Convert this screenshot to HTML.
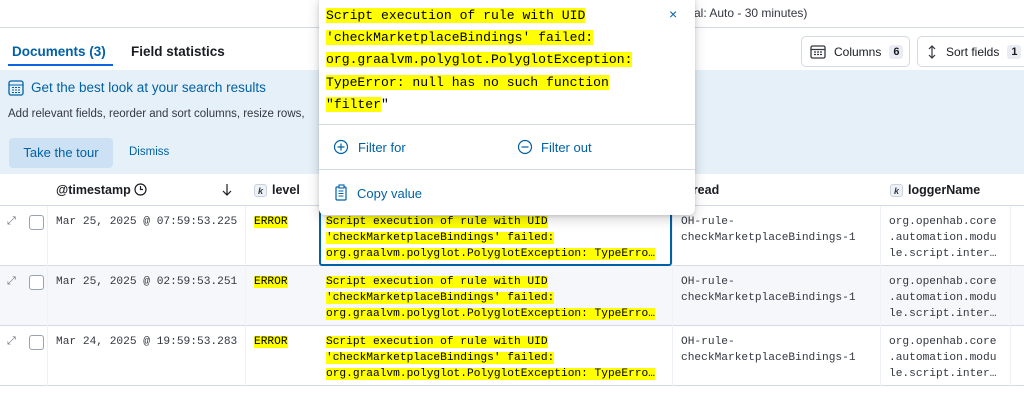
<!DOCTYPE html>
<html><head><meta charset="utf-8"><style>
*{box-sizing:border-box;margin:0;padding:0}
body{width:1024px;height:401px;overflow:hidden;background:#fff;font-family:"Liberation Sans",sans-serif;position:relative;color:#1a1c21}
.a{position:absolute}
.mono{font-family:"Liberation Mono",monospace;font-size:11.2px;line-height:16px;color:#343741;white-space:nowrap}
.hl{background:#ff0;color:#000}
.row{position:absolute;left:0;width:1024px;height:60px;border-bottom:1px solid #d3dae6}
.hdr{font-weight:bold;font-size:12.5px}
.kb{display:inline-block;width:13px;height:13px;border:1px solid #c9d3e0;border-radius:3px;background:#eef2f7;font-size:9px;font-style:italic;font-weight:bold;text-align:center;line-height:12px;color:#343741;vertical-align:middle;margin-right:5px}
.btn{position:absolute;top:36px;height:31px;border:1px solid #d3dae6;border-radius:5px;font-size:12px;display:flex;align-items:center;padding-left:8px;gap:8px;color:#1a1c21}
.cnt{background:#e9edf3;border-radius:3px;padding:1px 4px;font-weight:bold;font-size:11px}
.vl{position:absolute;top:206px;width:1px;height:180px;background:#eef1f5}
</style></head><body>
<div class="a" style="left:0;top:0;width:1024px;height:28px;border-bottom:1px solid #d3dae6"></div>
<div class="a" style="left:694px;top:6px;font-size:12px;color:#343741">al: Auto - 30 minutes)</div>
<div class="a" style="left:12px;top:44px;font-size:13.5px;font-weight:bold;color:#0061a6">Documents (3)</div>
<div class="a" style="left:8px;top:64px;width:105px;height:2px;background:#0b64dd"></div>
<div class="a" style="left:131px;top:44px;font-size:13.5px;font-weight:bold">Field statistics</div>
<div class="btn" style="left:801px;width:109px"><svg width="16" height="14" viewBox="0 0 16 14"><rect x="1" y="1" width="14" height="12" rx="1.5" fill="none" stroke="#343741" stroke-width="1.3"/><path d="M1 4.5h14M4 7h2M7 7h2M10 7h2M4 9.5h2M7 9.5h2M10 9.5h2" stroke="#343741" stroke-width="1.2"/></svg>Columns <span class="cnt">6</span></div>
<div class="btn" style="left:917px;width:120px"><svg width="12" height="14" viewBox="0 0 12 14"><path d="M6 1v12M3 4l3-3 3 3M3 10l3 3 3-3" fill="none" stroke="#343741" stroke-width="1.2"/></svg>Sort fields <span class="cnt">1</span></div>
<div class="a" style="left:0;top:70px;width:1024px;height:104px;background:#e6f0f8"></div>
<svg class="a" style="left:8px;top:80px" width="16" height="16" viewBox="0 0 16 16"><rect x="1" y="1" width="14" height="14" rx="2" fill="none" stroke="#0061a6" stroke-width="1.3"/><path d="M1 5h14M4 7.5h2M7 7.5h2M10 7.5h2M4 10h2M7 10h2M10 10h2M4 12.5h2M7 12.5h2M10 12.5h2" stroke="#0061a6" stroke-width="1"/></svg>
<div class="a" style="left:31px;top:80px;font-size:13.5px;color:#0061a6">Get the best look at your search results</div>
<div class="a" style="left:8px;top:108px;font-size:11.5px;color:#343741">Add relevant fields, reorder and sort columns, resize rows,</div>
<div class="a" style="left:9px;top:138px;width:104px;height:30px;background:#cce1f4;border-radius:4px;font-size:13px;color:#0061a6;text-align:center;line-height:30px">Take the tour</div>
<div class="a" style="left:129px;top:146px;font-size:11.5px;color:#0061a6">Dismiss</div>
<div class="a" style="left:0;top:174px;width:1024px;height:32px;border-bottom:1px solid #d3dae6"></div>
<div class="a hdr" style="left:56px;top:183px">@timestamp <svg width="13" height="13" viewBox="0 0 13 13" style="vertical-align:-2px"><circle cx="6.5" cy="6.5" r="5.5" fill="none" stroke="#1a1c21" stroke-width="1.2"/><path d="M6.5 3v3.5h2.5" fill="none" stroke="#1a1c21" stroke-width="1.2"/></svg></div>
<svg class="a" style="left:221px;top:183px" width="12" height="13" viewBox="0 0 12 13"><path d="M6 1v11M2 8l4 4 4-4" fill="none" stroke="#1a1c21" stroke-width="1.2"/></svg>
<div class="a hdr" style="left:254px;top:183px"><span class="kb">k</span>level</div>
<div class="a hdr" style="left:681px;top:183px">thread</div>
<div class="a hdr" style="left:890px;top:183px"><span class="kb">k</span>loggerName</div>

<div class="row" style="top:206px"></div>
<div class="row" style="top:266px;background:#f5f7fa"></div>
<div class="row" style="top:326px"></div>
<div class="vl" style="left:672px"></div>
<div class="vl" style="left:880px"></div>
<div class="vl" style="left:1010px"></div>
<div class="vl" style="left:245px"></div>
<div class="vl" style="left:47px"></div>
<div class="a" style="left:319px;top:206px;width:353px;height:60px;border:2px solid #0061a6;border-radius:3px"></div>

<!-- row 1 -->
<div class="a" style="left:7px;top:215px;color:#69707d;font-size:11px">⤢</div>
<div class="a" style="left:29px;top:215px;width:15px;height:15px;border:1px solid #98a2b3;border-radius:3px;background:#fff"></div>
<div class="a mono" style="left:56px;top:214px">Mar 25, 2025 @ 07:59:53.225</div>
<div class="a mono" style="left:254px;top:214px"><span class="hl">ERROR</span></div>
<div class="a mono" style="left:326px;top:214px"><span class="hl">Script execution of rule with UID </span><br><span class="hl">'checkMarketplaceBindings' failed: </span><br><span class="hl">org.graalvm.polyglot.PolyglotException: TypeErro…</span></div>
<div class="a mono" style="left:681px;top:214px">OH-rule-<br>checkMarketplaceBindings-1</div>
<div class="a mono" style="left:889px;top:214px">org.openhab.core<br>.automation.modu<br>le.script.inter…</div>
<!-- row 2 -->
<div class="a" style="left:7px;top:275px;color:#69707d;font-size:11px">⤢</div>
<div class="a" style="left:29px;top:275px;width:15px;height:15px;border:1px solid #98a2b3;border-radius:3px;background:#fff"></div>
<div class="a mono" style="left:56px;top:274px">Mar 25, 2025 @ 02:59:53.251</div>
<div class="a mono" style="left:254px;top:274px"><span class="hl">ERROR</span></div>
<div class="a mono" style="left:326px;top:274px"><span class="hl">Script execution of rule with UID </span><br><span class="hl">'checkMarketplaceBindings' failed: </span><br><span class="hl">org.graalvm.polyglot.PolyglotException: TypeErro…</span></div>
<div class="a mono" style="left:681px;top:274px">OH-rule-<br>checkMarketplaceBindings-1</div>
<div class="a mono" style="left:889px;top:274px">org.openhab.core<br>.automation.modu<br>le.script.inter…</div>
<!-- row 3 -->
<div class="a" style="left:7px;top:335px;color:#69707d;font-size:11px">⤢</div>
<div class="a" style="left:29px;top:335px;width:15px;height:15px;border:1px solid #98a2b3;border-radius:3px;background:#fff"></div>
<div class="a mono" style="left:56px;top:334px">Mar 24, 2025 @ 19:59:53.283</div>
<div class="a mono" style="left:254px;top:334px"><span class="hl">ERROR</span></div>
<div class="a mono" style="left:326px;top:334px"><span class="hl">Script execution of rule with UID </span><br><span class="hl">'checkMarketplaceBindings' failed: </span><br><span class="hl">org.graalvm.polyglot.PolyglotException: TypeErro…</span></div>
<div class="a mono" style="left:681px;top:334px">OH-rule-<br>checkMarketplaceBindings-1</div>
<div class="a mono" style="left:889px;top:334px">org.openhab.core<br>.automation.modu<br>le.script.inter…</div>

<!-- popover -->
<div class="a" style="left:319px;top:-4px;width:376px;height:219px;background:#fff;border-radius:6px;box-shadow:0 4px 12px rgba(0,0,0,.18),0 1px 3px rgba(0,0,0,.12)">
  <div class="a" style="left:7px;top:9px;width:340px;font-family:'Liberation Mono',monospace;font-size:13.1px;line-height:22.2px;color:#000;white-space:nowrap"><span class="hl">Script execution of rule with UID</span><br><span class="hl">'checkMarketplaceBindings' failed:</span><br><span class="hl">org.graalvm.polyglot.PolyglotException:</span><br><span class="hl">TypeError: null has no such function</span><br><span class="hl">"filter</span>"</div>
  <div class="a" style="left:350px;top:10px;color:#0061a6;font-size:14px">×</div>
  <div class="a" style="left:0;top:128px;width:376px;height:1px;background:#d3dae6"></div>
  <svg class="a" style="left:14px;top:143px" width="16" height="16" viewBox="0 0 16 16"><circle cx="8" cy="8" r="6.5" fill="none" stroke="#0061a6" stroke-width="1.2"/><path d="M8 4.5v7M4.5 8h7" stroke="#0061a6" stroke-width="1.2"/></svg>
  <div class="a" style="left:39px;top:144px;font-size:13px;color:#0061a6">Filter for</div>
  <svg class="a" style="left:198px;top:143px" width="16" height="16" viewBox="0 0 16 16"><circle cx="8" cy="8" r="6.5" fill="none" stroke="#0061a6" stroke-width="1.2"/><path d="M4.5 8h7" stroke="#0061a6" stroke-width="1.2"/></svg>
  <div class="a" style="left:222px;top:144px;font-size:13px;color:#0061a6">Filter out</div>
  <div class="a" style="left:0;top:173px;width:376px;height:1px;background:#d3dae6"></div>
  <svg class="a" style="left:16px;top:188px" width="14" height="17" viewBox="0 0 14 17"><rect x="1" y="3" width="10" height="13" rx="1" fill="none" stroke="#0061a6" stroke-width="1.2"/><rect x="4" y="1" width="5" height="3" fill="#fff" stroke="#0061a6" stroke-width="1.1"/><path d="M3.5 7h5M3.5 9.5h5M3.5 12h5" stroke="#0061a6" stroke-width="1"/></svg>
  <div class="a" style="left:38px;top:190px;font-size:13px;color:#0061a6">Copy value</div>
</div>
</body></html>
